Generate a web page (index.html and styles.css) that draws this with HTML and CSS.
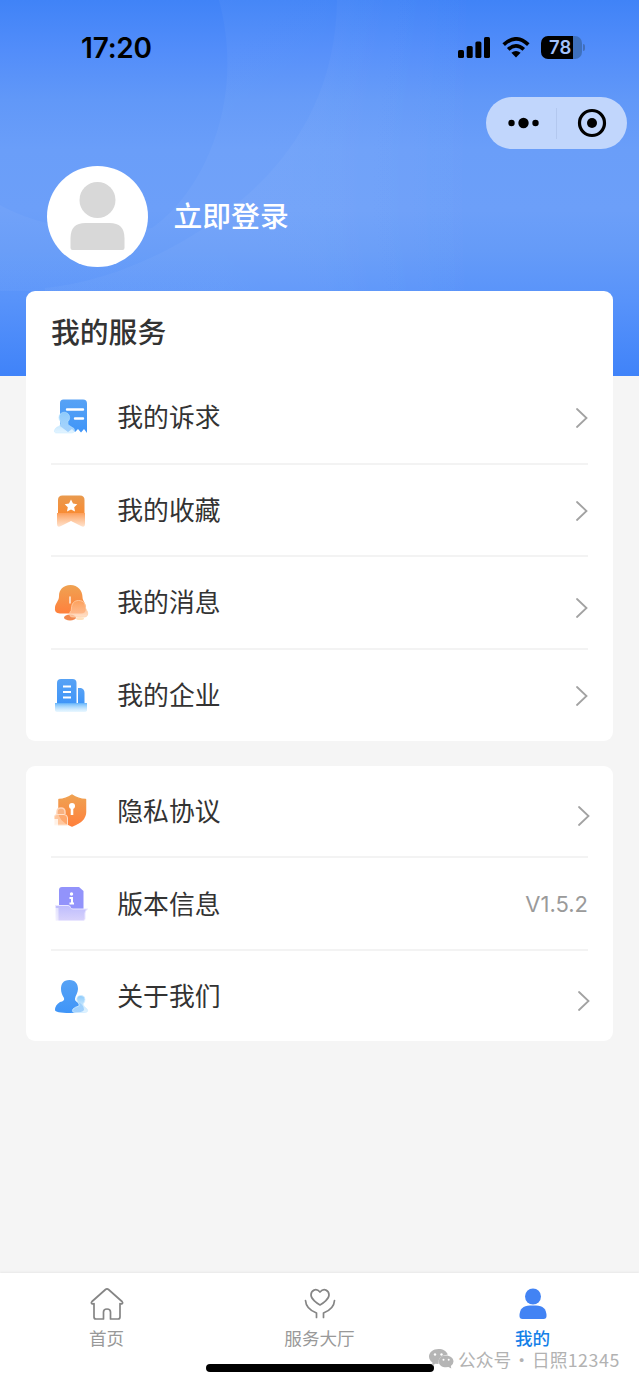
FILE: index.html
```html
<!DOCTYPE html>
<html lang="zh-CN">
<head>
<meta charset="utf-8">
<title>我的</title>
<link rel="stylesheet" href="styles.css">
</head>
<body>
<div class="page">
  <header class="hero">
    <svg class="hero-art" viewBox="0 0 639 375" aria-hidden="true">
      <defs>
        <linearGradient id="band" gradientUnits="userSpaceOnUse" x1="220" y1="0" x2="480" y2="0"><stop offset="0" stop-color="#fff" stop-opacity=".035"/><stop offset=".4" stop-color="#fff" stop-opacity=".03"/><stop offset="1" stop-color="#fff" stop-opacity="0"/></linearGradient>
      </defs>
      <path fill="url(#band)" d="M219 0C247 105 200 195 152 228C100 235 40 228 0 205V291H639V0Z"/>
      <path fill="url(#band)" d="M337 0C336 95 290 165 225 213C170 255 105 282 45 288V291H480V0Z"/>
    </svg>
    <div class="status">
      <span class="time">17:20</span>
      <div class="status-icons">
        <svg class="signal" width="32" height="21" viewBox="0 0 32 21"><rect x="0" y="13" width="6" height="8" rx="1.6"/><rect x="8.7" y="9" width="6" height="12" rx="1.6"/><rect x="17.4" y="4.500" width="6" height="16.500" rx="1.600"/><rect x="26" y="0" width="6" height="21" rx="1.6"/></svg>
        <svg class="wifi" width="28" height="21" viewBox="0 0 28 21"><g fill="none" stroke="#000" stroke-width="3.7"><path d="M1.700 7.600Q14-3.800 26.300 7.600"/><path d="M6.200 12.400Q14 5.400 21.800 12.400"/></g><path d="M9.400 15.700Q14 12.100 18.600 15.700L14 20.500Z"/></svg>
        <div class="battery"><span>78</span></div><i class="battery-tip"></i>
      </div>
    </div>
    <div class="capsule">
      <svg width="32" height="12" viewBox="0 0 32 12"><circle cx="3.500" cy="6" r="3.200"/><circle cx="15.500" cy="6" r="5.200"/><circle cx="27.500" cy="6" r="3.200"/></svg>
      <i class="capsule-line"></i>
      <svg width="30" height="30" viewBox="0 0 30 30"><circle cx="15" cy="15" r="12.500" fill="none" stroke="#000" stroke-width="3.200"/><circle cx="15" cy="15" r="5"/></svg>
    </div>
    <div class="profile">
      <div class="avatar"><svg width="101" height="101" viewBox="0 0 101 101"><circle cx="50.500" cy="35" r="18" fill="#d8d8d8"/><path fill="#d8d8d8" d="M23.500 83V73Q23.500 58 38.500 58H62.500Q77.500 58 77.500 73V83Q77.500 85 75.500 85H25.500Q23.500 85 23.500 83Z"/></svg></div>
      <span class="login">立即登录</span>
    </div>
  </header>

  <main class="content">
    <section class="card services">
      <h2 class="card-title">我的服务</h2>
      <div class="row">
        <svg class="icon" viewBox="0 0 40 40"><defs><linearGradient id="b1" x1="0" y1="0" x2="0" y2="1"><stop stop-color="#57a2f5"/><stop offset="1" stop-color="#3f95f8"/></linearGradient><linearGradient id="b2" x1="0" y1="0" x2="0" y2="1"><stop stop-color="#8ccafb"/><stop offset="1" stop-color="#d5efff" stop-opacity=".65"/></linearGradient></defs><path fill="url(#b1)" d="M10 6Q10 2.500 13.500 2.500H33Q37 2.500 37 6.500V36L34 32L31 35.500L28 32L25 35L22 32L18 35L10 29Z"/><path d="M17 12.500H33M25 21.500H33" stroke="#fff" stroke-width="2.400" stroke-linecap="round"/><path fill="url(#b2)" stroke="#c5e8ff" stroke-width=".5" d="M10.500 24.500A5.400 5.400 0 1 1 18 24.500Q17 28 20 29L24 31.500Q26 36 21 36H7Q3 36 5 32Q6 30 9.500 29Q11.500 27 10.500 24.500Z"/></svg>
        <span class="label">我的诉求</span><svg class="chevron" viewBox="0 0 12 20"><path d="M1 1L10.500 10L1 19"/></svg>
      </div>
      <div class="row">
        <svg class="icon" viewBox="0 0 40 40"><defs><linearGradient id="o1" x1="0" y1="0" x2="0" y2="1"><stop stop-color="#e99a4e"/><stop offset="1" stop-color="#f78c35"/></linearGradient><linearGradient id="o2" x1="0" y1="0" x2="0" y2="1"><stop stop-color="#fc9e59"/><stop offset="1" stop-color="#ffd3b3" stop-opacity=".7"/></linearGradient></defs><path fill="url(#o1)" d="M8 10Q8 5.500 12.500 5.500H30Q34.500 5.500 34.500 10V23H8Z"/><path fill="url(#o2)" d="M7 23H35V34Q35 38 31 36L21 31L11 36Q7 38 7 34Z"/><path fill="#fff" d="M21 9.500L23 13.500L27.300 14.200L24.200 17.200L25 21.500L21 19.500L17 21.500L17.800 17.200L14.700 14.200L19 13.500Z"/></svg>
        <span class="label">我的收藏</span><svg class="chevron" viewBox="0 0 12 20"><path d="M1 1L10.500 10L1 19"/></svg>
      </div>
      <div class="row">
        <svg class="icon" viewBox="0 0 40 40"><defs><linearGradient id="n1" x1="0" y1="0" x2="0" y2="1"><stop stop-color="#efa252"/><stop offset="1" stop-color="#ff803c"/></linearGradient></defs><ellipse cx="20" cy="34.500" rx="6" ry="3" fill="#f2884e"/><path fill="url(#n1)" d="M20.500 2C28 2 32.500 8 32.500 14C32.500 18 36 20 36 25Q36 30.500 31 30.500H10Q4 30.500 5 24C6 19 9 18 9 13C9 7 13 2 20.500 2Z"/><path d="M20 14V20" stroke="#fff" stroke-width="1.300" stroke-linecap="round"/><path fill="url(#o2)" stroke="#ffd0aa" stroke-width=".8" d="M28.500 17.500C34 17.500 35.500 21 35.500 25L37.500 29Q38.500 33.500 34.500 34H23Q18.500 34 20 29Q21.500 28 21.500 25C21.500 21 24 17.500 28.500 17.500Z"/><ellipse cx="30" cy="35.500" rx="4" ry="1.500" fill="#ffe2bf"/></svg>
        <span class="label">我的消息</span><svg class="chevron low" viewBox="0 0 12 20"><path d="M1 1L10.500 10L1 19"/></svg>
      </div>
      <div class="row">
        <svg class="icon" viewBox="0 0 40 40"><defs><linearGradient id="e1" x1="0" y1="0" x2="0" y2="1"><stop stop-color="#66b5fb"/><stop offset="1" stop-color="#b5e3ff" stop-opacity=".3"/></linearGradient></defs><g transform="translate(0 -1)"><path fill="url(#b1)" d="M7 8Q7 4 11 4H22.500Q26.500 4 26.500 8V29H7Z"/><path fill="url(#b1)" d="M28 13H31Q34.500 14 34.500 18V29H28Z"/><path fill="url(#e1)" d="M5 28H37V35Q37 37 34 37H8Q5 37 5 35Z"/><path d="M13 11.500H21M13 17H21M13 22.500H21" stroke="#fff" stroke-width="1.900"/></g></svg>
        <span class="label">我的企业</span><svg class="chevron" viewBox="0 0 12 20"><path d="M1 1L10.500 10L1 19"/></svg>
      </div>
    </section>

    <section class="card info">
      <div class="row">
        <svg class="icon" viewBox="0 0 40 40"><path fill="url(#n1)" stroke="url(#n1)" stroke-width="1.500" stroke-linejoin="round" d="M22 4Q28 8 35.500 8.500V21Q35.500 30 22 35Q9 30 9 21V8.500Q16 8 22 4Z"/><circle cx="22" cy="15" r="3" fill="#fff"/><path d="M22 15V24" stroke="#fff" stroke-width="2.600"/><path d="M7 23V21Q7 17 11 17Q15 17 15 21V23" fill="#f8b180" stroke="#ffd4b7" stroke-width="1.500"/><path fill="#ffb37c" fill-opacity=".75" stroke="#ffe0c9" d="M4.500 26Q4.500 23.500 7 23.500H14Q17.500 23.500 17.500 27V34H4.500Z"/><path fill="#fff" opacity=".75" d="M4 28H8V35H4Z"/></svg>
        <span class="label">隐私协议</span><svg class="chevron low" viewBox="0 0 12 20"><path d="M1 1L10.500 10L1 19"/></svg>
      </div>
      <div class="row">
        <svg class="icon" viewBox="0 0 40 40"><defs><linearGradient id="p1" x1="0" y1="0" x2="0" y2="1"><stop stop-color="#bdbcfd"/><stop offset="1" stop-color="#d8d2fb"/></linearGradient></defs><path fill="#9293fb" d="M9 6Q9 3 12 3H29L33.500 7V30H9Z"/><circle cx="21.500" cy="10" r="1.700" fill="#fff"/><path d="M19.500 14H22V19M19.500 19.500H24" fill="none" stroke="#fff" stroke-width="2"/><path fill="url(#p1)" stroke="#e9e6ff" d="M5.500 21.500H18Q20 21.500 20.500 23.500Q21 25 23 25H37.500Q35 26.500 35 29V34.500Q35 36.500 33 36.500H6Z"/><path fill="#fff" opacity=".55" d="M5 24H8.500V37H5Z"/></svg>
        <span class="label">版本信息</span><span class="version">V1.5.2</span>
      </div>
      <div class="row">
        <svg class="icon" viewBox="0 0 40 40"><path fill="url(#b1)" d="M19.500 4C25.500 4 28 8 28 13C28 17 25 20 25 23Q25 26 30 27Q34 30 34 34Q33 37 20 37Q5 37 5 34Q5 29 10 26Q15 25 14 22C12 19 11 16 11 13C11 8 13 4 19.500 4Z"/><path fill="url(#b2)" stroke="#d2ecff" stroke-width=".8" d="M31 19.500Q35 19.500 35 23.500Q35 26 33 28Q33 30 37 33Q39 36.500 34 36.500H26Q21 36.500 23 33Q25 31 29 30Q29.500 28 28 26.500C25.500 23 27 19.500 31 19.500Z"/></svg>
        <span class="label">关于我们</span><svg class="chevron low" viewBox="0 0 12 20"><path d="M1 1L10.500 10L1 19"/></svg>
      </div>
    </section>
  </main>

  <nav class="tabbar">
    <div class="tab">
      <svg width="36" height="36" viewBox="0 0 36 36" fill="none" stroke="#858585" stroke-width="1.700" stroke-linejoin="round" stroke-linecap="round"><path d="M5 17.500V31Q5 33 7 33H14.500V26Q14.500 23 18 23Q21.500 23 21.500 26V33H29Q31 33 31 31V17.500M5 18Q1 18 3 15.500L16.500 3.500Q18 2.200 19.500 3.500L33 15.500Q35 18 31 18"/></svg>
      <span>首页</span>
    </div>
    <div class="tab">
      <svg width="36" height="36" viewBox="0 0 36 36" fill="none" stroke="#858585" stroke-width="1.700" stroke-linejoin="round" stroke-linecap="round"><path d="M18 6C14 1.500 9 4.500 9 9C9 13 15 17.500 18 19C21 17.500 27 13 27 9C27 4.500 22 1.500 18 6Z"/><path d="M3.500 14.500Q4 23 14.500 27V31.500M32.500 14.500Q32 23 21.500 27V31.500"/></svg>
      <span>服务大厅</span>
    </div>
    <div class="tab active">
      <svg width="36" height="36" viewBox="0 0 36 36" fill="#4283f4"><circle cx="18" cy="10.500" r="8"/><path d="M4.500 30Q4.500 19.500 15 19.500H21Q31.500 19.500 31.500 30Q31.500 33 28.500 33H7.500Q4.500 33 4.500 30Z"/></svg>
      <span>我的</span>
    </div>
    <i class="home-indicator"></i>
    <div class="watermark">
      <svg width="25" height="21" viewBox="0 0 25 21"><path fill="#b5b5b5" d="M9.500 1C4 1 0 4.500 0 8.500Q0 12 3.500 14.500L3 17.500L6.500 15.700L9.500 16Q8 8 18.800 6.500C17.500 3 14 1 9.500 1Z"/><path fill="#b5b5b5" d="M17 7.500C12.500 7.500 9.700 10.300 9.700 13.500C9.700 17 13 19.300 17 19.300L19.500 19L22.300 20.500L21.800 18Q24.500 16 24.500 13.500C24.500 10 21 7.500 17 7.500Z"/><g fill="#fff"><circle cx="6" cy="6.500" r="1.200"/><circle cx="12.500" cy="6.500" r="1.200"/><circle cx="14.500" cy="11.700" r="1"/><circle cx="19.700" cy="11.700" r="1"/></g></svg>
      <span>公众号 · 日照<b class="digits">12345</b></span>
    </div>
  </nav>
</div>
</body>
</html>
```
FILE: styles.css
```css
* { box-sizing: border-box; }
body { margin: 0; background: #f5f5f5; font-family: "Noto Sans CJK SC", sans-serif; color: #333; }
svg, i { display: block; flex: none; }
.page { height: 1385px; display: flex; flex-direction: column; overflow: hidden; }
.hero { position: relative; height: 375.5px; flex: none; background: linear-gradient(#4083f7 0, #528dfa 50px, #6198f8 100px, #6a9ef9 150px, #6c9ff9 210px, #659bf8 250px, #5893fa 300px, #4083f9 375px); }
.hero-art { position: absolute; inset: 0; width: 639px; height: 375px; }
.status { position: relative; height: 97.4px; padding: 0 54px 2px 81px; display: flex; align-items: center; justify-content: space-between; }
.time { font: 600 28px/34px Inter, sans-serif; color: #000; letter-spacing: -.2px; padding-top: 1px; }
.status-icons { display: flex; align-items: center; }
.wifi { margin: 0 11px 0 12px; }
.battery { width: 41px; height: 23px; border-radius: 7px; background: linear-gradient(90deg, #000 32px, #3e70bd 32px); color: #a3c2fa; font: 600 18.5px/23px Inter, sans-serif; padding-left: 8px; }
.battery-tip { width: 2px; height: 7px; margin-left: 1px; border-radius: 0 2px 2px 0; background: #426fba; }
.capsule { position: relative; width: 141px; height: 52px; margin-left: 486px; border-radius: 26px; background: #c1d6fc; display: flex; align-items: center; padding-left: 22px; }
.capsule-line { width: 1px; height: 31px; margin: 0 20px 0 16px; background: #b3c8ef; }
.profile { position: relative; display: flex; align-items: center; margin: 16.6px 0 0 47px; gap: 25.5px; }
.avatar { width: 101px; height: 101px; border-radius: 50%; background: #fff; overflow: hidden; }
.avatar svg { margin-top: -1px; }
.login { color: #fff; font-size: 28.8px; line-height: 42px; font-weight: 500; padding-bottom: 3px; }
.content { position: relative; margin: -84.5px 26px 0; flex: 1; display: flex; flex-direction: column; gap: 25px; }
.card { background: #fff; border-radius: 9px; padding: 0 25px; }
.services { height: 450px; }
.card-title { margin: 0; height: 81px; line-height: 79px; font-size: 28.8px; font-weight: 500; }
.row { height: 92.7px; display: flex; align-items: center; border-bottom: 2px solid #f3f3f3; }
.services .row:last-child { height: 91px; border: 0; }
.info { height: 275px; }
.info .row { height: 92.4px; }
.info .row:last-child { height: 90px; border: 0; }
.icon { width: 40px; height: 40px; margin-left: -1px; }
.label { flex: 1; margin-left: 27.3px; font-size: 25.8px; line-height: 38px; padding-bottom: 2.6px; }
.info .label { padding-bottom: 2px; }
.chevron { width: 12px; height: 20px; margin-top: 1px; fill: none; stroke: #a2a2a2; stroke-width: 1.8; stroke-linecap: round; }
.chevron.low { margin-top: 10px; }
.info .chevron { margin-right: -2px; }
.version { font: 22px/30px Inter, sans-serif; color: #9a9a9a; }
.tabbar { position: relative; height: 112px; flex: none; display: grid; grid-template-columns: repeat(3, 1fr); background: #fff; box-shadow: 0 -1px 2px #e8e8e8; }
.tab { display: flex; flex-direction: column; align-items: center; padding-top: 13px; font-size: 17.6px; line-height: 20px; color: #999; }
.tab span { margin-top: 6px; }
.tab.active { color: #1580e8; font-weight: 500; }
.home-indicator { position: absolute; left: 206px; top: 91px; width: 228px; height: 8px; border-radius: 4px; background: #000; }
.watermark { position: absolute; left: 429px; top: 75px; display: flex; align-items: center; gap: 4px; color: #b2b2b2; font-size: 17.8px; line-height: 20px; white-space: nowrap; word-spacing: -2.5px; }
.digits { font-weight: 400; letter-spacing: .6px; }
```
